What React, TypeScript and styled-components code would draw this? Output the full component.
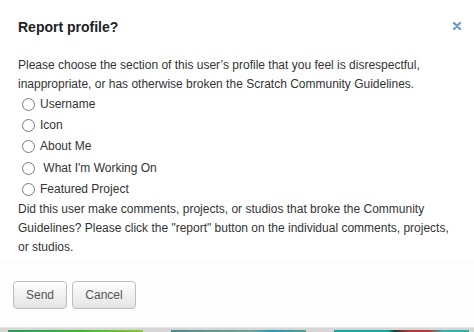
import styled, { createGlobalStyle } from 'styled-components';

const Global = createGlobalStyle`
  html, body { margin: 0; padding: 0; background: #fff; }
  body { font-family: "Liberation Sans", Arial, sans-serif; color: #333; }
`;

const Page = styled.div`
  width: 474px;
  height: 332px;
  display: flex;
  flex-direction: column;
  overflow: hidden;
  background: #d6d6d6;
`;

const Dialog = styled.div`
  height: 327px;
  display: flex;
  flex-direction: column;
  background: #fff;
`;

const Header = styled.div`
  display: flex;
  justify-content: space-between;
  align-items: center;
  padding: 17px 12px 0 18px;
  height: 37px;
  box-sizing: border-box;
`;

const Title = styled.h3`
  margin: 0;
  font-size: 14px;
  font-weight: bold;
  line-height: 20px;
  color: #222;
`;

const Close = styled.button`
  border: 0;
  background: none;
  padding: 0;
  width: 10px;
  height: 10px;
  display: flex;
  margin-top: -3px;
  cursor: pointer;
`;

const Body = styled.div`
  padding: 19px 18px 0 18px;
  font-size: 12px;
  line-height: 19px;
  flex: 1;
`;

const Text = styled.p`
  margin: 0;
`;

const Options = styled.div`
  display: flex;
  flex-direction: column;
  padding-left: 4px;
`;

const Option = styled.label`
  display: flex;
  align-items: center;
  height: 21.2px;
  gap: 5px;
`;

const Radio = styled.span`
  width: 11px;
  height: 11px;
  border: 1px solid #7a7a7a;
  border-radius: 50%;
  background: #fff;
  flex: none;
`;

const Footer = styled.div`
  background: #fdfdfd;
  padding: 22px 13px 18px;
  display: flex;
  gap: 5px;
`;

const Button = styled.button<{ $w: number }>`
  width: ${(p) => p.$w}px;
  height: 28px;
  border: 1px solid #bdbdbd;
  border-radius: 4px;
  background: linear-gradient(#fefefe, #e4e4e4);
  font-family: "Liberation Sans", Arial, sans-serif;
  font-size: 12px;
  color: #555;
  padding: 0;
`;

const Strip = styled.div`
  flex: 1;
  display: flex;
  gap: 28px;
  padding: 2px 0 0 8px;
  border-top: 1px solid #e6e6e6;
`;

const Thumb = styled.div<{ $bg: string }>`
  width: 135px;
  background: ${(p) => p.$bg};
`;

const options = ['Username', 'Icon', 'About Me', "\u00a0What I'm Working On", 'Featured Project'];

export default function App() {
  return (
    <Page>
      <Global />
      <Dialog>
        <Header>
          <Title>Report profile?</Title>
          <Close aria-label="Close">
            <svg width="10" height="10" viewBox="0 0 10 10">
              <path d="M2 2 L8 8 M8 2 L2 8" stroke="#6e9ccc" strokeWidth="2.4" strokeLinecap="round" />
            </svg>
          </Close>
        </Header>
        <Body>
          <Text>
            Please choose the section of this user’s profile that you feel is disrespectful,
            inappropriate, or has otherwise broken the Scratch Community Guidelines.
          </Text>
          <Options>
            {options.map((o) => (
              <Option key={o}>
                <Radio />
                {o}
              </Option>
            ))}
          </Options>
          <Text>
            Did this user make comments, projects, or studios that broke the Community
            Guidelines? Please click the "report" button on the individual comments, projects,
            or studios.
          </Text>
        </Body>
        <Footer>
          <Button $w={54}>Send</Button>
          <Button $w={64}>Cancel</Button>
        </Footer>
      </Dialog>
      <Strip>
        <Thumb $bg="linear-gradient(90deg, #2e9a5a, #3fae3a 50%, #8cc640)" />
        <Thumb $bg="linear-gradient(90deg, #4f8b86, #6aa39a 60%, #2c93b8 75%, #5e9988)" />
        <Thumb $bg="linear-gradient(90deg, #1aa6a0 40%, #1c3b3b 45%, #b03a3a 55%, #b03a3a 70%, #33b0a8 80%)" />
      </Strip>
    </Page>
  );
}
